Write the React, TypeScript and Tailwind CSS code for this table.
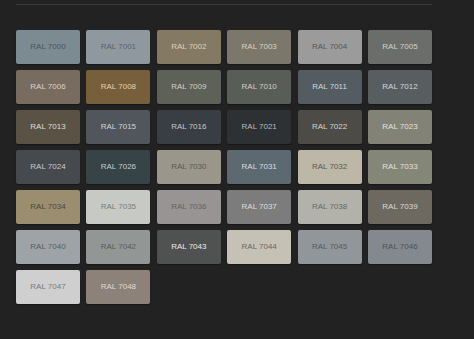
import React from "react";

type Swatch = { code: string; bg: string; fg: string };

const swatches: Swatch[] = [
  { code: "7000", bg: "#7c8a91", fg: "#4b5660" },
  { code: "7001", bg: "#8f989f", fg: "#5a636b" },
  { code: "7002", bg: "#847a63", fg: "#ddd3bd" },
  { code: "7003", bg: "#7b776a", fg: "#d9d3c6" },
  { code: "7004", bg: "#9b9b9b", fg: "#575757" },
  { code: "7005", bg: "#6b6d6a", fg: "#d2d2d0" },
  { code: "7006", bg: "#786c60", fg: "#ddd3c6" },
  { code: "7008", bg: "#775f3c", fg: "#e3d3b3" },
  { code: "7009", bg: "#5e6158", fg: "#cfd1c6" },
  { code: "7010", bg: "#595d57", fg: "#cfd0c8" },
  { code: "7011", bg: "#545c61", fg: "#d1d7de" },
  { code: "7012", bg: "#585e60", fg: "#d3d6da" },
  { code: "7013", bg: "#5a5245", fg: "#e0dcd2" },
  { code: "7015", bg: "#51555c", fg: "#d3d6dc" },
  { code: "7016", bg: "#383e43", fg: "#c3c8cf" },
  { code: "7021", bg: "#2e3134", fg: "#b4b8bd" },
  { code: "7022", bg: "#4d4b45", fg: "#d5d3cd" },
  { code: "7023", bg: "#828277", fg: "#e3e3db" },
  { code: "7024", bg: "#46494e", fg: "#c6c9cf" },
  { code: "7026", bg: "#374447", fg: "#c3cdd0" },
  { code: "7030", bg: "#9b968c", fg: "#5c5750" },
  { code: "7031", bg: "#5d6970", fg: "#d6dde3" },
  { code: "7032", bg: "#bdb7a8", fg: "#5b5650" },
  { code: "7033", bg: "#848677", fg: "#e1e2da" },
  { code: "7034", bg: "#9a8d70", fg: "#4d4636" },
  { code: "7035", bg: "#c7c9c5", fg: "#7a7c7a" },
  { code: "7036", bg: "#989493", fg: "#666262" },
  { code: "7037", bg: "#7b7c7b", fg: "#dedede" },
  { code: "7038", bg: "#b2b2ab", fg: "#696965" },
  { code: "7039", bg: "#6d6961", fg: "#dcd8d2" },
  { code: "7040", bg: "#9da3a7", fg: "#575c60" },
  { code: "7042", bg: "#929796", fg: "#575b5a" },
  { code: "7043", bg: "#4f5250", fg: "#eaeceb" },
  { code: "7044", bg: "#c5c1b4", fg: "#6b6860" },
  { code: "7045", bg: "#91969a", fg: "#565a5e" },
  { code: "7046", bg: "#83898e", fg: "#4f5458" },
  { code: "7047", bg: "#cfcfcf", fg: "#7a7a7a" },
  { code: "7048", bg: "#8c8279", fg: "#e0d9d2" },
];

export default function App() {
  return (
    <div className="w-[474px] h-[339px] bg-[#222222] overflow-hidden pt-[4px] pl-[16px]">
      <div className="w-[416px] h-px bg-[#3a3a3a]" />
      <div className="mt-[25px] grid grid-cols-[repeat(6,64px)] auto-rows-[34px] gap-x-[6.4px] gap-y-[6px]">
        {swatches.map((s) => (
          <div
            key={s.code}
            className="rounded-[2px] flex items-center justify-center shadow-[0_1px_1px_rgba(0,0,0,0.35)]"
            style={{ backgroundColor: s.bg, color: s.fg }}
          >
            <span className="text-[8px] leading-none font-['Liberation_Sans',Arial,sans-serif]">
              RAL {s.code}
            </span>
          </div>
        ))}
      </div>
    </div>
  );
}
